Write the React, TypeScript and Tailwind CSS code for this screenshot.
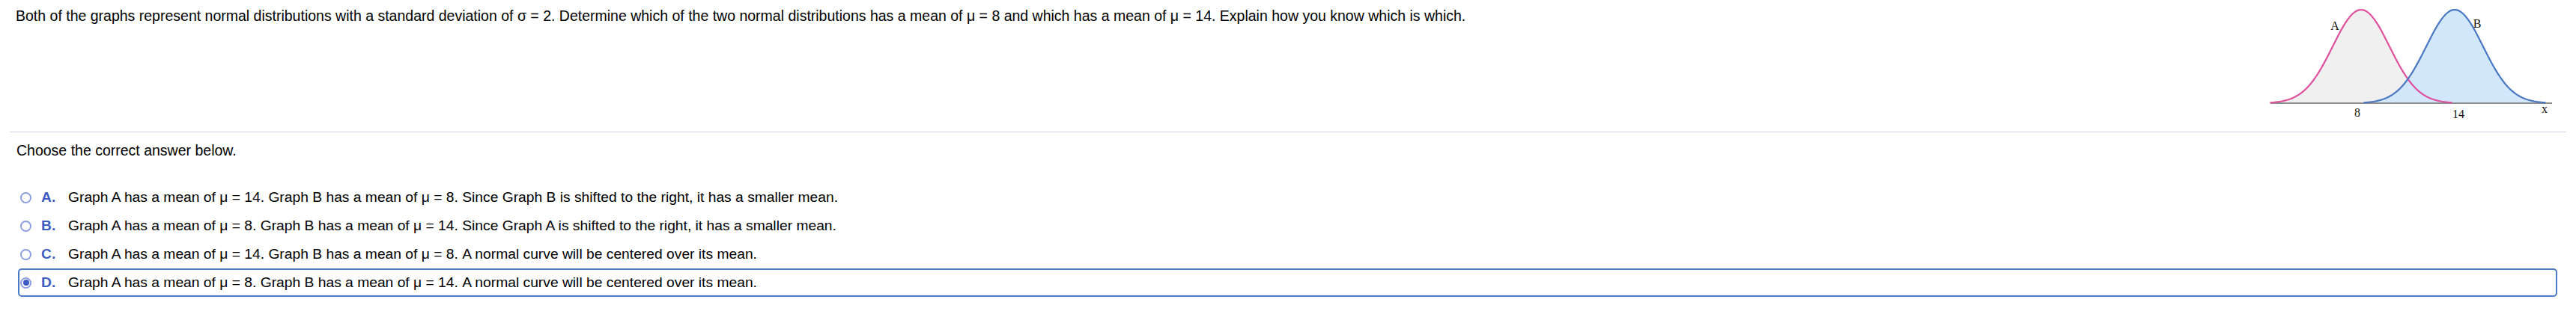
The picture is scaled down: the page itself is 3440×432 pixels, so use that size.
import React from 'react';

const AXIS_Y = 138;
const PEAK = 125;
const SIGMA = 38;

function curve(mean: number) {
  const pts: string[] = [];
  for (let i = 0; i <= 80; i++) {
    const z = -3.2 + (6.4 * i) / 80;
    const x = mean + z * SIGMA;
    const y = AXIS_Y - PEAK * Math.exp(-(z * z) / 2);
    pts.push(`${x.toFixed(2)},${y.toFixed(2)}`);
  }
  return pts;
}

function NormalGraph() {
  const a = curve(143);
  const b = curve(268);
  const fillA = `M${a[0]} L${a.join(' L')} Z`;
  const fillB = `M${b[0]} L${b.join(' L')} Z`;
  return (
    <svg width="420" height="165" viewBox="0 0 420 165" className="shrink-0">
      <path d={fillA} fill="#f0f0f0" />
      <path d={fillB} fill="#d3e7fb" />
      <line x1="22" y1={AXIS_Y} x2="398" y2={AXIS_Y} stroke="#8c8c8c" strokeWidth="2" />
      <polyline points={a.join(' ')} fill="none" stroke="#e0509e" strokeWidth="2.2" />
      <polyline points={b.join(' ')} fill="none" stroke="#4a78c2" strokeWidth="2.2" />
      <g fontFamily='"Liberation Serif", serif' fontSize="16" fill="#111">
        <text x="108" y="40" textAnchor="middle">A</text>
        <text x="298" y="37" textAnchor="middle">B</text>
        <text x="138" y="156" textAnchor="middle">8</text>
        <text x="273" y="158" textAnchor="middle">14</text>
        <text x="388" y="151" textAnchor="middle">x</text>
      </g>
    </svg>
  );
}

const options = [
  { key: 'A', text: 'Graph A has a mean of μ = 14. Graph B has a mean of μ = 8. Since Graph B is shifted to the right, it has a smaller mean.' },
  { key: 'B', text: 'Graph A has a mean of μ = 8. Graph B has a mean of μ = 14. Since Graph A is shifted to the right, it has a smaller mean.' },
  { key: 'C', text: 'Graph A has a mean of μ = 14. Graph B has a mean of μ = 8. A normal curve will be centered over its mean.' },
  { key: 'D', text: 'Graph A has a mean of μ = 8. Graph B has a mean of μ = 14. A normal curve will be centered over its mean.' },
];

export default function App() {
  const selected = 'D';
  return (
    <div className="w-[3440px] h-[432px] bg-white text-black font-['Liberation_Sans',Arial,sans-serif] text-[19.5px]">
      {/* Question */}
      <div className="flex items-start justify-between pl-[21px] pr-[10px]">
        <p className="pt-[9px] leading-[24px]">
          Both of the graphs represent normal distributions with a standard deviation of σ = 2. Determine which of the two normal distributions has a mean of μ = 8 and which has a mean of μ = 14. Explain how you know which is which.
        </p>
        <NormalGraph />
      </div>

      <div className="mx-[13px] mt-[11px] h-px bg-[#cdd3e0]" />

      <p className="pl-[22px] mt-[12px] leading-[24px]">Choose the correct answer below.</p>

      {/* Answers */}
      <div className="mt-[32px] ml-[24px] mr-[25px] flex flex-col text-[19.25px]">
        {options.map((o) => {
          const on = o.key === selected;
          return (
            <div
              key={o.key}
              className={`h-[38px] flex items-center pl-[1px] rounded-[5px] border-2 ${on ? 'border-[#4a7bc6]' : 'border-transparent'}`}
            >
              <span className="w-[15px] h-[15px] rounded-full border-2 border-[#8d9de3] flex items-center justify-center shrink-0">
                {on && <span className="w-[8px] h-[8px] rounded-full bg-[#3f5cc6]" />}
              </span>
              <span className="ml-[13px] w-[36px] font-bold text-[#3d5cc0]">{o.key}.</span>
              <span>{o.text}</span>
            </div>
          );
        })}
      </div>
    </div>
  );
}
